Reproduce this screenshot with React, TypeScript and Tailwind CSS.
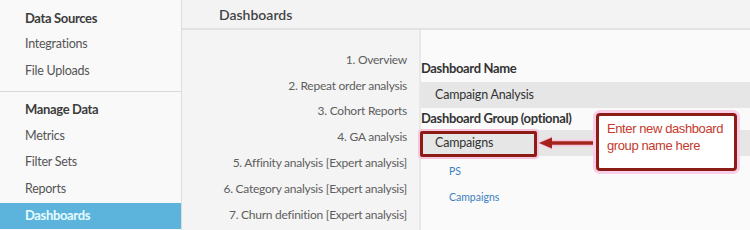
import React from "react";

const font = { fontFamily: "Lato, 'Open Sans', sans-serif" };

const dataSources = ["Integrations", "File Uploads"];
const manageData = ["Metrics", "Filter Sets", "Reports"];

const dashboards = [
  "1. Overview",
  "2. Repeat order analysis",
  "3. Cohort Reports",
  "4. GA analysis",
  "5. Affinity analysis [Expert analysis]",
  "6. Category analysis [Expert analysis]",
  "7. Churn definition [Expert analysis]",
];

function SideItem({ label, bold, active }: { label: string; bold?: boolean; active?: boolean }) {
  return (
    <div
      className={`flex h-[26.5px] items-center pl-[25px] ${
        active
          ? "bg-[#5cb3dc] text-[13px] font-bold tracking-[-0.35px] text-[#e6fcff]"
          : bold
          ? "text-[13px] font-bold tracking-[-0.35px] text-[#3c3c3c]"
          : "text-[12.5px] tracking-[-0.25px] text-[#555]"
      }`}
    >
      {label}
    </div>
  );
}

export default function App() {
  return (
    <div className="relative flex h-[230px] w-[750px] overflow-hidden bg-[#f9f9f9]" style={font}>
      {/* Sidebar */}
      <div className="flex w-[182px] shrink-0 flex-col border-r border-[#dcdcdc] bg-[#f9f9f9]">
        <div className="border-b border-[#d9d9d9] pt-[5px] pb-[6px]">
          <SideItem label="Data Sources" bold />
          {dataSources.map((s) => (
            <SideItem key={s} label={s} />
          ))}
        </div>
        <div className="pt-[5px]">
          <SideItem label="Manage Data" bold />
          {manageData.map((s) => (
            <SideItem key={s} label={s} />
          ))}
          <SideItem label="Dashboards" active />
        </div>
      </div>

      {/* Main */}
      <div className="flex flex-1 flex-col">
        <div className="flex h-[30px] shrink-0 items-center border-b-2 border-[#e2e2e2] bg-[#f3f3f3] pl-[37px] text-[14px] font-semibold text-[#444]">
          Dashboards
        </div>
        <div className="flex flex-1">
          {/* Dashboard list */}
          <div className="w-[237px] shrink-0 bg-[#f4f4f4] pt-[17px] pr-[12px]">
            {dashboards.map((d) => (
              <div
                key={d}
                className="flex h-[25.8px] items-center justify-end text-[12px] tracking-[-0.25px] text-[#5e5e5e]"
              >
                {d}
              </div>
            ))}
          </div>

          {/* Form */}
          <div className="flex-1 border-l-2 border-[#e8e8e8] bg-[#fafafa] pt-[28px]">
            <div className="flex h-[22px] items-center text-[13px] font-bold tracking-[-0.35px] text-[#333]">
              Dashboard Name
            </div>
            <div className="mt-[2px] flex h-[26px] items-center bg-[#e6e6e6] pl-[14px] text-[12.5px] tracking-[-0.2px] text-[#333]">
              Campaign Analysis
            </div>
            <div className="flex h-[22px] items-center text-[13px] font-bold tracking-[-0.35px] text-[#333]">
              Dashboard Group (optional)
            </div>
            <div className="flex h-[26px] items-center bg-[#e6e6e6] pl-[14px] text-[12.5px] tracking-[-0.2px] text-[#333]">
              Campaigns
            </div>
            <div className="pt-[3px] pl-[28px] text-[10.5px] text-[#3d7fc1]">
              <div className="flex h-[26px] items-center">PS</div>
              <div className="flex h-[26px] items-center">Campaigns</div>
            </div>
          </div>
        </div>
      </div>

      {/* Annotation: highlight box */}
      <div className="pointer-events-none absolute left-[420px] top-[131px] h-[26px] w-[117px] rounded-[2px] border-[3px] border-[#8c1d16] shadow-[0_0_0_2px_#f6c6df]" />

      {/* Annotation: arrow */}
      <svg className="pointer-events-none absolute left-[536px] top-[134px]" width="64" height="18" viewBox="0 0 64 18">
        <line x1="14" y1="9" x2="63" y2="9" stroke="#f6c6df" strokeWidth="7" />
        <polygon points="1,9 16,2 16,16" fill="#f6c6df" />
        <line x1="14" y1="9" x2="63" y2="9" stroke="#a3241a" strokeWidth="3.5" />
        <polygon points="3,9 16,3.5 16,14.5" fill="#a3241a" />
      </svg>

      {/* Annotation: callout */}
      <div
        className="pointer-events-none absolute left-[596px] top-[113px] h-[58px] w-[141px] rounded-[4px] border-[3px] border-[#8c1d16] bg-white pl-[8px] pt-[4px] text-[13px] leading-[17px] tracking-[-0.4px] text-[#c43a2c] shadow-[0_0_0_3px_#f8cfe6]"
        style={{ fontFamily: "'Liberation Sans', Arial, sans-serif" }}
      >
        Enter new dashboard group name here
      </div>
    </div>
  );
}
